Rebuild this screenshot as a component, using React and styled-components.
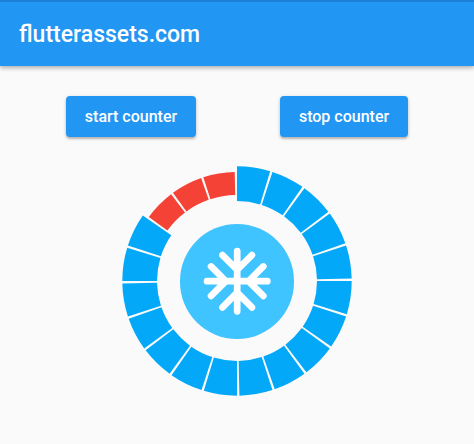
import React from "react";
import styled, { createGlobalStyle } from "styled-components";

const TOTAL_STEPS = 20;
const RED_STEPS = 3;
const STEP_ANGLE = 360 / TOTAL_STEPS;
const GAP_ANGLE = 1.2;

const toPoint = (radius, angle) => {
  const rad = ((angle - 90) * Math.PI) / 180;
  return `${(radius * Math.cos(rad)).toFixed(3)} ${(radius * Math.sin(rad)).toFixed(3)}`;
};

const segmentPath = (inner, outer, from, to) =>
  `M${toPoint(outer, from)} A${outer} ${outer} 0 0 1 ${toPoint(outer, to)} ` +
  `L${toPoint(inner, to)} A${inner} ${inner} 0 0 0 ${toPoint(inner, from)} Z`;

const StepRing = () => (
  <RingSvg>
    {Array.from({ length: TOTAL_STEPS }, (_, i) => {
      const isRed = i >= TOTAL_STEPS - RED_STEPS;
      const from = i * STEP_ANGLE;
      const to = from + STEP_ANGLE - GAP_ANGLE;
      return (
        <path
          key={i}
          d={isRed ? segmentPath(86, 109, from, to) : segmentPath(80, 114.7, from, to)}
          fill={isRed ? "#f44336" : "#03a9f8"}
        />
      );
    })}
  </RingSvg>
);

const Snowflake = () => (
  <FlakeSvg>
    {[0, 90, 180, 270].map((angle) => (
      <g key={angle} transform={`rotate(${angle} 12 12)`}>
        <path d="M12 12V3M7.6 4.2L12 8.6L16.4 4.2" />
      </g>
    ))}
  </FlakeSvg>
);

const App = () => {
  return (
    <Screen>
      <GlobalStyle />
      <AppBar>
        <Title>flutterassets.com</Title>
      </AppBar>
      <ButtonRow>
        <CounterButton $width={130}>start counter</CounterButton>
        <CounterButton $width={128}>stop counter</CounterButton>
      </ButtonRow>
      <Indicator>
        <StepRing />
        <Core>
          <Snowflake />
        </Core>
      </Indicator>
    </Screen>
  );
};

export default App;

const GlobalStyle = createGlobalStyle`
  * {
    box-sizing: border-box;
  }

  body {
    margin: 0;
    background: #fafafa;
    font-family: Roboto, "Liberation Sans", sans-serif;
  }
`;

const Screen = styled.div`
  width: 474px;
  height: 444px;
  background: #fafafa;
  overflow: hidden;
`;

const AppBar = styled.header`
  display: flex;
  align-items: center;
  height: 65.5px;
  padding: 2px 19px 0;
  border-top: 2px solid #1c80d6;
  background: #2196f3;
  box-shadow: 0 2px 4px rgba(0, 0, 0, 0.24), 0 1px 7px rgba(0, 0, 0, 0.1);
`;

const Title = styled.h1`
  margin: 0;
  color: #fff;
  font-size: 23px;
  font-weight: 500;
  line-height: 1;
`;

const ButtonRow = styled.div`
  display: flex;
  gap: 84px;
  padding: 30px 66px 0;
`;

const CounterButton = styled.button`
  flex: none;
  width: ${({ $width }) => $width}px;
  height: 41.5px;
  padding: 1px 0 0;
  border: none;
  border-radius: 4px;
  background: #2196f3;
  color: #fff;
  font-family: inherit;
  font-size: 16px;
  font-weight: 500;
  cursor: pointer;
  box-shadow: 0 2px 2px rgba(0, 0, 0, 0.2), 0 1px 4px rgba(0, 0, 0, 0.14);
`;

const Indicator = styled.div`
  display: grid;
  place-items: center;
  width: 230px;
  height: 230px;
  margin: 29.3px 0 0 122px;

  > * {
    grid-area: 1 / 1;
  }
`;

const RingSvg = styled.svg.attrs({
  width: "230",
  height: "230",
  viewBox: "-115 -115 230 230",
})`
  display: block;
`;

const Core = styled.div`
  display: flex;
  align-items: center;
  justify-content: center;
  width: 114.6px;
  height: 114.6px;
  border-radius: 50%;
  background: #40c4ff;
`;

const FlakeSvg = styled.svg.attrs({
  width: "80.4",
  height: "80.4",
  viewBox: "0 0 24 24",
  fill: "none",
  stroke: "#fff",
  strokeWidth: "2",
  strokeLinecap: "round",
})`
  display: block;
`;
